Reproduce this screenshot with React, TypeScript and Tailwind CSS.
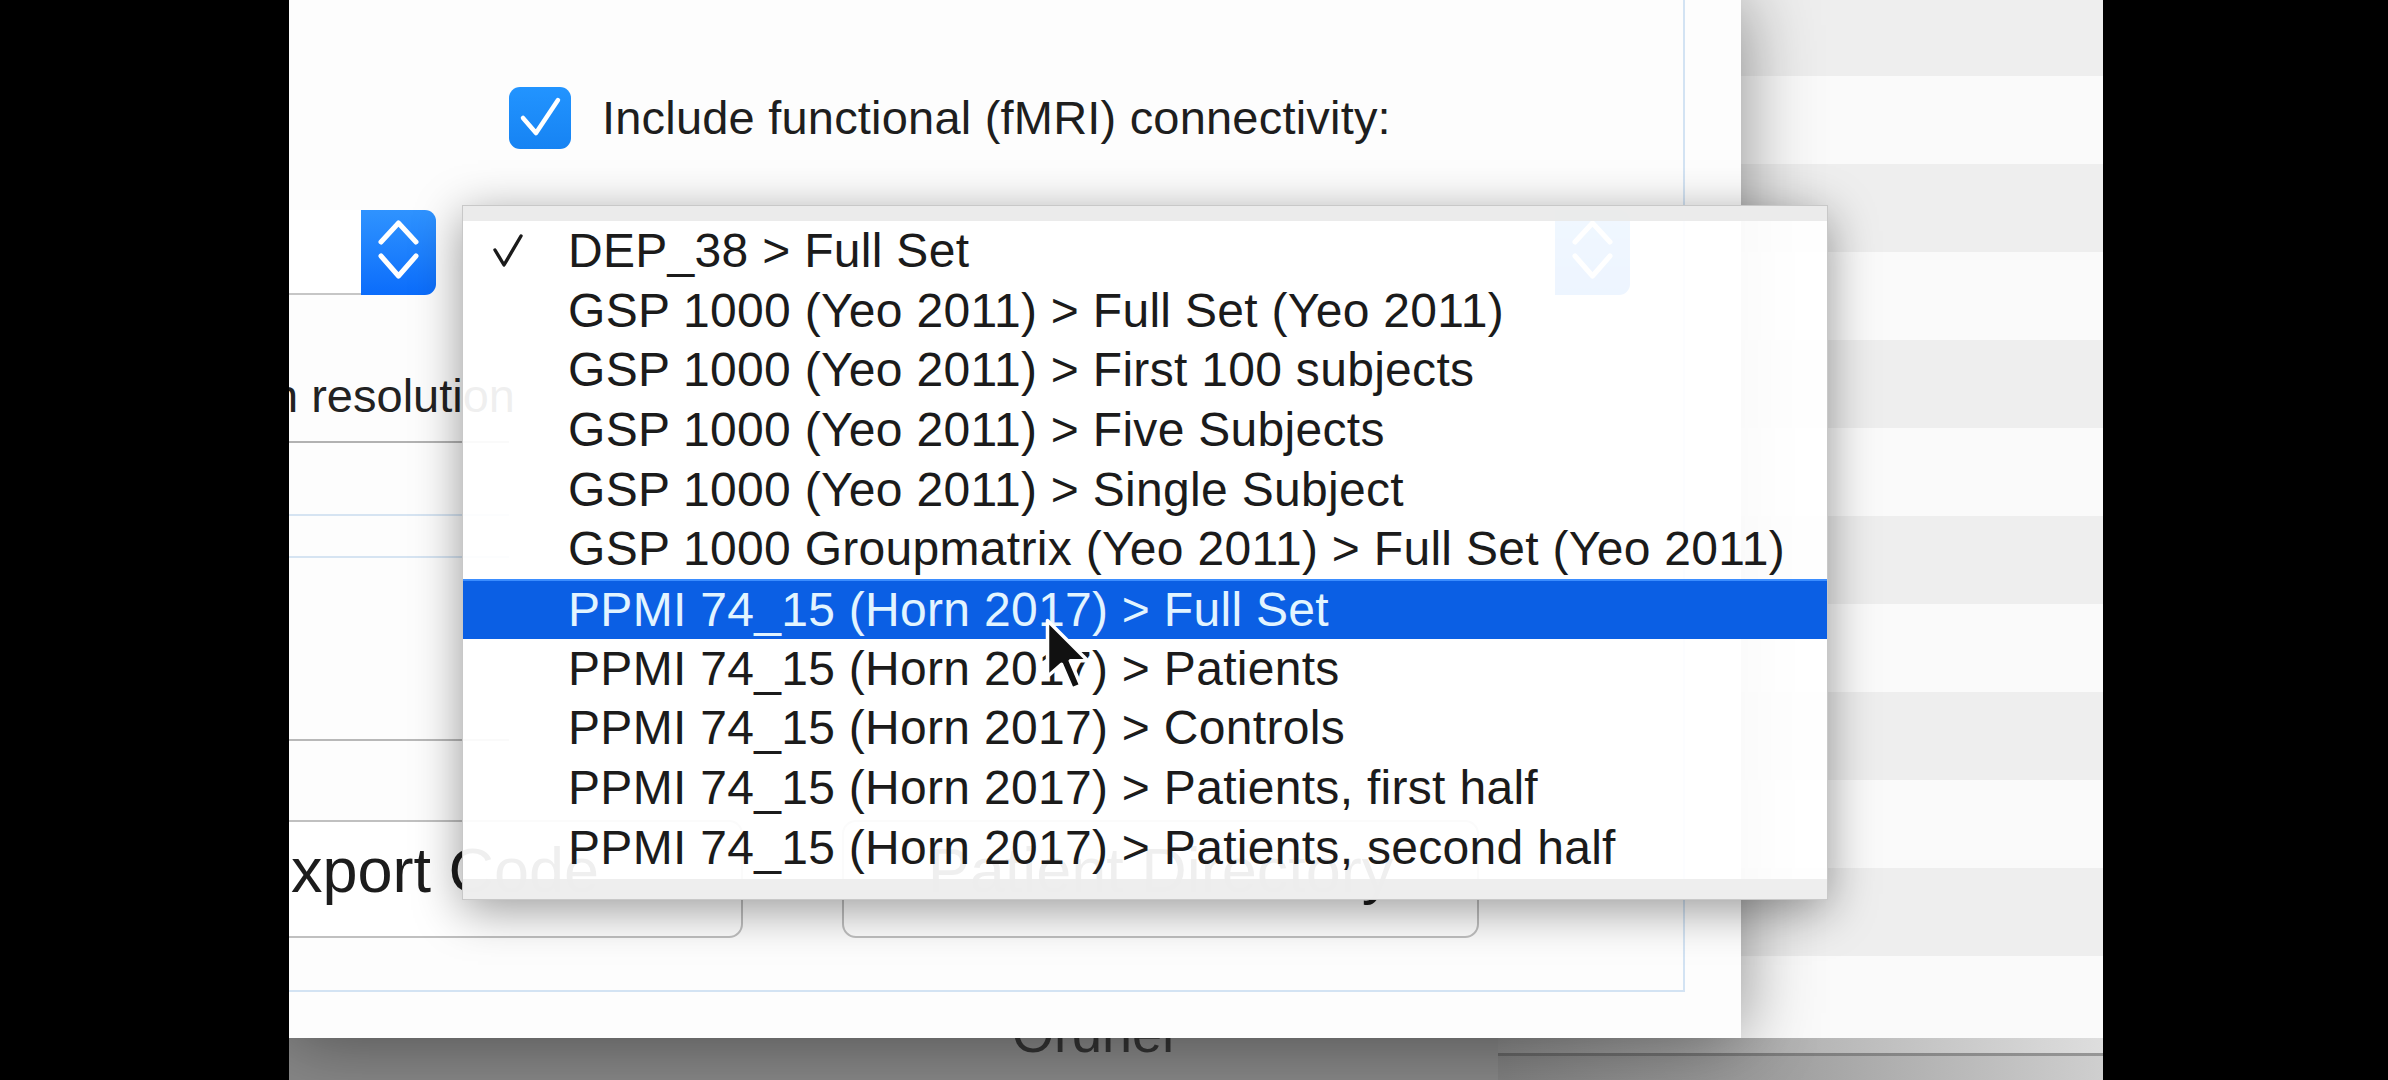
import { useState } from 'react'

const FONT = "font-['Liberation_Sans',Arial,sans-serif]"

const CONNECTOMES = [
  'DEP_38 > Full Set',
  'GSP 1000 (Yeo 2011) > Full Set (Yeo 2011)',
  'GSP 1000 (Yeo 2011) > First 100 subjects',
  'GSP 1000 (Yeo 2011) > Five Subjects',
  'GSP 1000 (Yeo 2011) > Single Subject',
  'GSP 1000 Groupmatrix (Yeo 2011) > Full Set (Yeo 2011)',
  'PPMI 74_15 (Horn 2017) > Full Set',
  'PPMI 74_15 (Horn 2017) > Patients',
  'PPMI 74_15 (Horn 2017) > Controls',
  'PPMI 74_15 (Horn 2017) > Patients, first half',
  'PPMI 74_15 (Horn 2017) > Patients, second half',
]

function Stepper() {
  return (
    <div className="flex h-[85px] w-[75px] shrink-0 items-center justify-center rounded-r-[11px] bg-gradient-to-b from-[#2f93ff] to-[#0b6cfb]">
      <svg width="75" height="85" viewBox="0 0 75 85" aria-hidden="true">
        <path
          d="M20 32 L37.5 13 L55 32 M20 46 L37.5 66 L55 46"
          fill="none"
          stroke="white"
          strokeWidth="5"
          strokeLinecap="round"
          strokeLinejoin="round"
        />
      </svg>
    </div>
  )
}

function Dialog() {
  return (
    <div className="relative z-10 h-[1038px] w-[1452px] shrink-0 overflow-hidden bg-[#fdfdfd] shadow-[0_0_70px_rgba(0,0,0,0.45)]">
      <div className="flex h-[992px] w-[1396px] flex-col border-r-2 border-b-2 border-[#d3e3f3]">
        <div className="mt-[87px] ml-[220px] flex items-center gap-[31px]">
          <div className="flex size-[62px] items-center justify-center rounded-[11px] bg-gradient-to-b from-[#2294ff] to-[#1683f3]">
            <svg width="62" height="62" viewBox="0 0 62 62" aria-hidden="true">
              <path
                d="M14 31 L27 46 L49 13"
                fill="none"
                stroke="white"
                strokeWidth="4.5"
                strokeLinecap="round"
                strokeLinejoin="round"
              />
            </svg>
          </div>
          <span className="text-[47px] leading-[60px] tracking-[0.2px] text-[#1e1e1e]">
            Include functional (fMRI) connectivity:
          </span>
        </div>

        <div className="mt-[61px] flex">
          <div className="h-[85px] w-[72px] shrink-0 border-b-2 border-[#c6c6c6] bg-white" />
          <Stepper />
          <div className="ml-[1119px]">
            <Stepper />
          </div>
        </div>

        <div className="mt-[71px] ml-[-17px] text-[47px] leading-[60px] whitespace-nowrap text-[#222]">
          n resolution
        </div>

        <div className="mt-[15px] h-[2px] w-[220px] bg-[#b2b2b2]" />
        <div className="mt-[71px] h-[2px] w-[220px] bg-[#d6e4f2]" />
        <div className="mt-[40px] h-[2px] w-[220px] bg-[#d6e4f2]" />
        <div className="mt-[181px] h-[2px] w-[220px] bg-[#b8b8b8]" />

        <div className="mt-[79px] flex">
          <div className="ml-[-184px] flex h-[118px] w-[638px] shrink-0 items-center justify-center rounded-[14px] border-2 border-[#c0c0c0] bg-white pb-[18px] text-[63px] whitespace-nowrap text-[#1c1c1c]">
            Export Code
          </div>
          <div className="ml-[99px] flex h-[118px] w-[637px] shrink-0 items-center justify-center rounded-[14px] border-2 border-[#c0c0c0] bg-white pb-[18px] text-[63px] whitespace-nowrap text-[#1c1c1c]">
            Patient Directory
          </div>
        </div>
      </div>
    </div>
  )
}

function BackgroundWindow() {
  const rows = Array.from({ length: 11 }, (_, i) => i)
  return (
    <div className="flex h-[1038px] w-[362px] shrink-0 flex-col overflow-hidden">
      <div className="h-[76px] shrink-0 bg-[#eeeeee]" />
      {rows.map((i) => (
        <div
          key={i}
          className={[
            'h-[88px] shrink-0',
            i % 2 === 0 ? 'bg-[#fafafa]' : 'bg-[#eeeeee]',
          ].join(' ')}
        />
      ))}
    </div>
  )
}

function BottomStrip() {
  return (
    <div className="flex h-[42px] shrink-0 overflow-hidden bg-[#878787]">
      <div className="h-[42px] w-[1209px] shrink-0 overflow-hidden bg-[#878787] pt-px">
        <div className="mt-[-33px] ml-[723px] text-[54px] leading-[54px] text-[#333]">
          Ordner
        </div>
      </div>
      <div className="flex h-[42px] flex-1 flex-col">
        <div className="h-[15px] bg-gradient-to-r from-[#8a8a8a] via-[#b4b4b4] to-[#dedede]" />
        <div className="h-[3px] bg-gradient-to-r from-[#666666] to-[#969696]" />
        <div className="flex-1 bg-gradient-to-r from-[#808080] via-[#a2a2a2] to-[#cfcfcf]" />
      </div>
    </div>
  )
}

function CheckGlyph() {
  return (
    <svg width="30" height="34" viewBox="0 0 30 34" aria-hidden="true">
      <path
        d="M2 16 L11 31 L28 2"
        fill="none"
        stroke="#1b1b1b"
        strokeWidth="3.4"
        strokeLinecap="round"
        strokeLinejoin="round"
      />
    </svg>
  )
}

function ConnectomeMenu({ selected, hovered }: { selected: number; hovered: number }) {
  return (
    <div className="absolute top-[205px] left-[173px] z-20 flex h-[695px] w-[1366px] flex-col border border-[#c8c8c8] bg-white/[0.93] shadow-[0_10px_45px_rgba(0,0,0,0.4)]">
      <div className="h-[15px] shrink-0 bg-[#e9e9e9]/90" />
      {CONNECTOMES.map((label, i) => (
        <div
          key={label}
          className={[
            'flex h-[59.7px] shrink-0 items-center text-[48px] tracking-[0.3px] whitespace-nowrap',
            i === hovered
              ? 'border-t-2 border-[#3b8dff] bg-[#0b5fe4] text-[#e2f4ff]'
              : 'text-[#1b1b1b]',
          ].join(' ')}
        >
          <span className="flex w-[105px] shrink-0 justify-end pr-[45px]">
            {i === selected ? <CheckGlyph /> : null}
          </span>
          <span>{label}</span>
        </div>
      ))}
      <div className="mt-auto h-[20px] shrink-0 bg-[#ececec]/90" />
    </div>
  )
}

function Cursor() {
  return (
    <svg
      className="absolute top-[617px] left-[755px] z-30"
      width="49"
      height="77"
      viewBox="0 0 14 22"
      aria-hidden="true"
    >
      <path
        d="M1 1 L1 17 L5 13.5 L8 20.5 L10.5 19.5 L7.5 12.5 L12.5 12.5 Z"
        fill="#111"
        stroke="white"
        strokeWidth="1"
        strokeLinejoin="round"
      />
    </svg>
  )
}

export default function App() {
  const [selected] = useState(0)
  const [hovered] = useState(6)

  return (
    <div className={`flex h-[1080px] w-[2388px] overflow-hidden bg-black ${FONT}`}>
      <div className="h-full w-[289px] shrink-0 bg-black" />
      <div className="relative flex h-[1080px] w-[1814px] shrink-0 flex-col">
        <div className="flex h-[1038px] shrink-0">
          <Dialog />
          <BackgroundWindow />
        </div>
        <BottomStrip />
        <ConnectomeMenu selected={selected} hovered={hovered} />
        <Cursor />
      </div>
      <div className="h-full flex-1 bg-black" />
    </div>
  )
}
